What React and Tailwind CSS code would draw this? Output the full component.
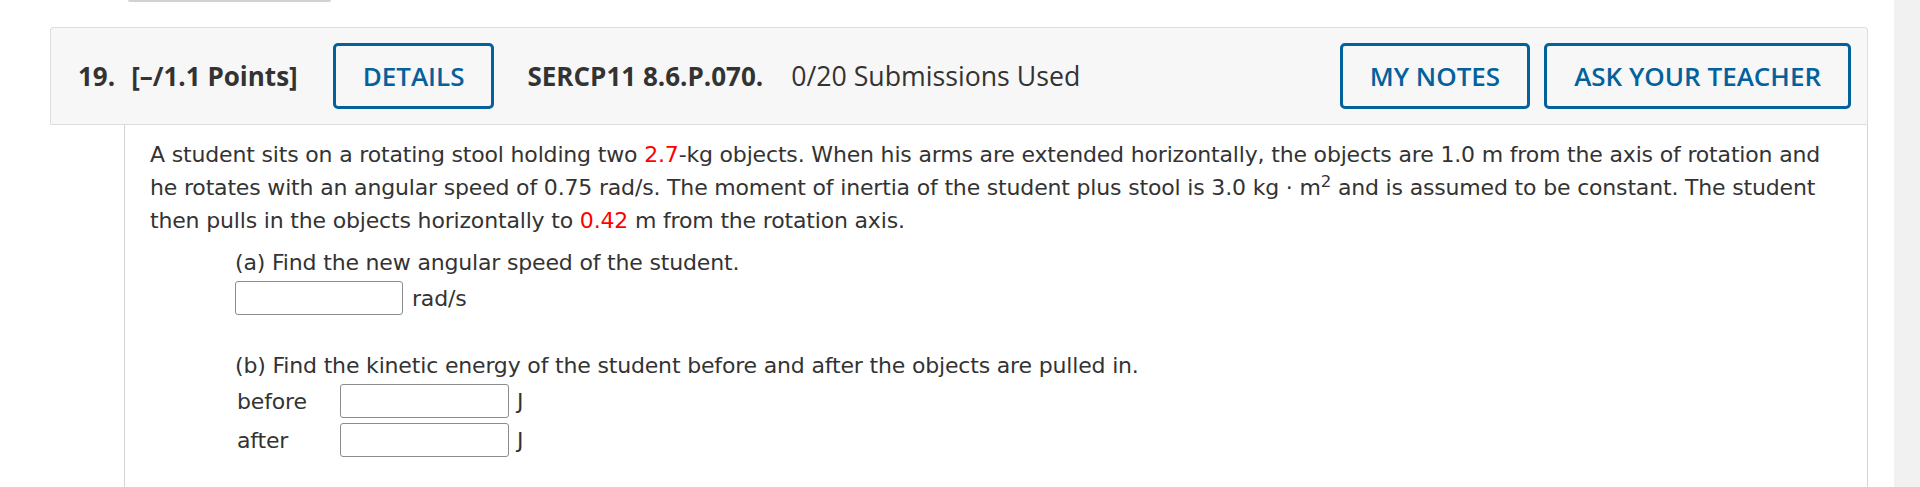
import React from "react";

const buttonClass =
  "flex h-[66px] items-center rounded-[5px] border-[3px] border-[#03619c] bg-transparent px-[27px] text-[26px] font-semibold text-[#03619c]";

function AnswerInput({ width = "w-[168px]", height = "h-[34px]" }) {
  return (
    <input
      type="text"
      className={`${width} ${height} rounded-[3px] border border-[#8c8c8c] bg-white px-2 outline-none`}
    />
  );
}

function App() {
  return (
    <div className="flex h-[487px] w-full overflow-hidden bg-white">
      <div className="flex flex-1 flex-col pl-[50px] pr-[26px]">
        {/* edge of the previous block */}
        <div className="ml-[78px] h-[2px] w-[203px] rounded-b bg-[#d2d2d2]" />

        {/* Question header */}
        <div className="mt-[25px] flex h-[98px] items-center rounded-t-[3px] border border-[#dddddd] bg-[#f7f7f7] pl-[27px] pr-[16px] font-['Open_Sans',sans-serif] text-[26px] text-[#333333]">
          <span className="font-bold">19.</span>
          <span className="ml-[16px] font-bold">[–/1.1 Points]</span>
          <button className={`ml-[35px] ${buttonClass}`}>DETAILS</button>
          <span className="ml-[33px] font-bold">SERCP11 8.6.P.070.</span>
          <span className="ml-[28px] text-[26.7px]">0/20 Submissions Used</span>
          <div className="ml-auto flex gap-[14px]">
            <button className={buttonClass}>MY NOTES</button>
            <button className={buttonClass}>ASK YOUR TEACHER</button>
          </div>
        </div>

        {/* Question body */}
        <div className="ml-[74px] flex-1 border-x border-[#d4d4d4] pl-[25px] pr-[28px] pt-[13px] font-['DejaVu_Sans',Verdana,sans-serif] text-[22px] leading-[33px] tracking-[-0.17px] text-[#333333]">
          <p>
            A student sits on a rotating stool holding two{" "}
            <span className="text-[#ff0000]">2.7</span>-kg objects. When his
            arms are extended horizontally, the objects are 1.0 m from the axis
            of rotation and he rotates with an angular speed of 0.75 rad/s. The
            moment of inertia of the student plus stool is 3.0 kg · m
            <sup>2</sup> and is assumed to be constant. The student then pulls
            in the objects horizontally to{" "}
            <span className="text-[#ff0000]">0.42</span> m from the rotation
            axis.
          </p>

          <div className="ml-[85px] mt-[9px]">
            <p>(a) Find the new angular speed of the student.</p>
            <div className="mt-[2px] flex items-center gap-[9px]">
              <AnswerInput />
              <span>rad/s</span>
            </div>

            <p className="mt-[34px]">
              (b) Find the kinetic energy of the student before and after the
              objects are pulled in.
            </p>
            <div className="mt-[2px] flex flex-col gap-[5px]">
              <div className="flex items-center">
                <span className="w-[105px] pl-[2px]">before</span>
                <AnswerInput width="w-[169px]" />
                <span className="ml-[8px]">J</span>
              </div>
              <div className="flex items-center">
                <span className="w-[105px] pl-[2px]">after</span>
                <AnswerInput width="w-[169px]" />
                <span className="ml-[8px]">J</span>
              </div>
            </div>
          </div>
        </div>
      </div>
      <div className="w-[26px] bg-[#f1f1f1]" />
    </div>
  );
}

export default App;
